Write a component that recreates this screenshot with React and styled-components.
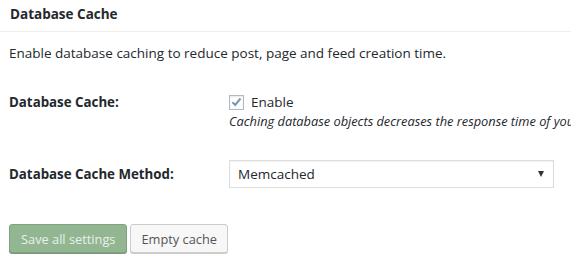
import React from "react";
import styled, { createGlobalStyle } from "styled-components";

const GlobalStyle = createGlobalStyle`
  html, body {
    margin: 0;
    padding: 0;
    background: #fff;
    overflow: hidden;
  }
  body {
    font-family: "Open Sans", "Noto Sans", sans-serif;
    color: #23282d;
    font-size: 13.5px;
  }
`;

const Panel = styled.div`
  width: 571px;
  height: 273px;
  overflow: hidden;
`;

const Header = styled.h2`
  margin: 0;
  height: 32px;
  box-sizing: border-box;
  padding: 5px 10px 0;
  font-size: 13.5px;
  font-weight: 700;
  line-height: 18px;
  border-bottom: 1px solid #eee;
`;

const Body = styled.div`
  padding: 12px 9px 0;
`;

const Intro = styled.p`
  margin: 0;
  line-height: 18px;
  white-space: nowrap;
`;

const Form = styled.div`
  display: grid;
  grid-template-columns: 220px 1fr;
  row-gap: 30px;
  margin-top: 31px;
  align-items: start;
`;

const Label = styled.div`
  font-weight: 700;
  font-size: 13.3px;
  line-height: 18px;
  align-self: ${(p) => (p.$center ? "center" : "start")};
`;

const Field = styled.div`
  display: flex;
  flex-direction: column;
  white-space: nowrap;
`;

const CheckLine = styled.label`
  display: flex;
  align-items: center;
  gap: 7px;
  line-height: 18px;
`;

const Box = styled.span`
  width: 15px;
  height: 15px;
  box-sizing: border-box;
  border: 1px solid #b4b9be;
  background: #fff;
  box-shadow: inset 0 1px 2px rgba(0, 0, 0, 0.1);
  display: flex;
  align-items: center;
  justify-content: center;
`;

const Hint = styled.span`
  font-style: italic;
  font-size: 12.8px;
  line-height: 18px;
  margin-top: 1px;
`;

const Select = styled.div`
  width: 325px;
  height: 28px;
  box-sizing: border-box;
  border: 1px solid #ddd;
  display: flex;
  align-items: center;
  justify-content: space-between;
  padding: 0 9px 0 8px;
  box-shadow: inset 0 1px 2px rgba(0, 0, 0, 0.05);
`;

const Arrow = styled.span`
  width: 0;
  height: 0;
  border-left: 3.5px solid transparent;
  border-right: 3.5px solid transparent;
  border-top: 6px solid #333;
`;

const Actions = styled.div`
  display: flex;
  gap: 3px;
  margin-top: 36px;
`;

const Button = styled.button`
  height: 29px;
  padding: 0 ${(p) => (p.$primary ? "11px" : "10px")};
  font-family: inherit;
  font-size: 12.8px;
  border-radius: 3px;
  border: 1px solid ${(p) => (p.$primary ? "#7fa27f" : "#ccc")};
  background: ${(p) => (p.$primary ? "#92b592" : "#f7f7f7")};
  color: ${(p) => (p.$primary ? "#e8f1e8" : "#555")};
  box-shadow: 0 1px 0 ${(p) => (p.$primary ? "#7a9a7a" : "#ccc")};
`;

export default function App() {
  return (
    <Panel>
      <GlobalStyle />
      <Header>Database Cache</Header>
      <Body>
        <Intro>Enable database caching to reduce post, page and feed creation time.</Intro>
        <Form>
          <Label>Database Cache:</Label>
          <Field>
            <CheckLine>
              <Box>
                <svg width="11" height="10" viewBox="0 0 11 10">
                  <path d="M1.5 5.2 L4.2 8 L9.5 1.5" fill="none" stroke="#7a97b0" strokeWidth="2" />
                </svg>
              </Box>
              Enable
            </CheckLine>
            <Hint>Caching database objects decreases the response time of your site.</Hint>
          </Field>
          <Label $center>Database Cache Method:</Label>
          <Field>
            <Select>
              Memcached
              <Arrow />
            </Select>
          </Field>
        </Form>
        <Actions>
          <Button $primary>Save all settings</Button>
          <Button>Empty cache</Button>
        </Actions>
      </Body>
    </Panel>
  );
}
